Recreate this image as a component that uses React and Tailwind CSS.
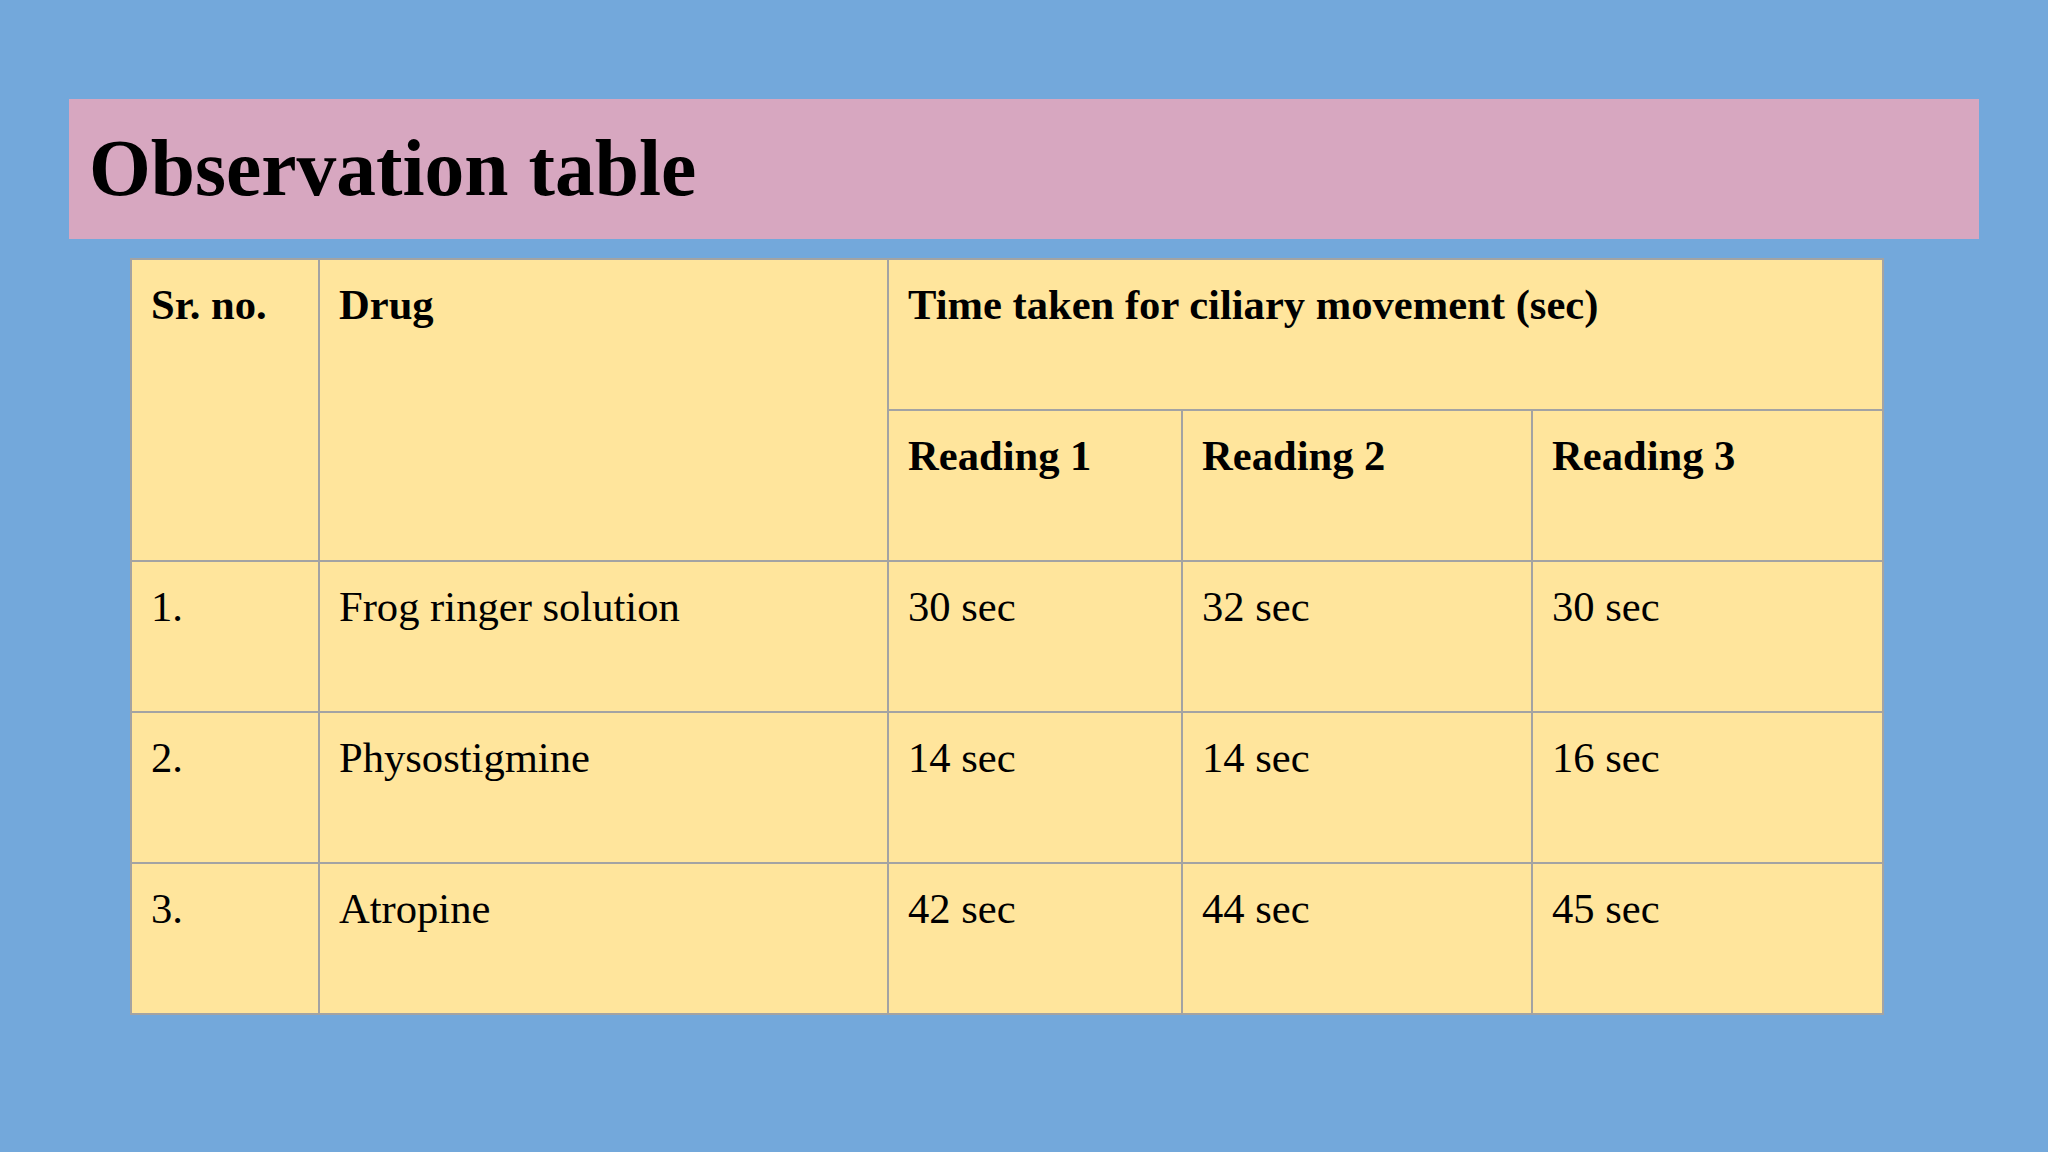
const rows = [
    { no: "1.", drug: "Frog ringer solution", r: ["30 sec", "32 sec", "30 sec"] },
    { no: "2.", drug: "Physostigmine", r: ["14 sec", "14 sec", "16 sec"] },
    { no: "3.", drug: "Atropine", r: ["42 sec", "44 sec", "45 sec"] },
];

const cell = "border-2 border-[#a3a3a3] align-top text-left px-[19px] pt-[21px] h-[151px]";

const App = () => {
    return (
        <div className="w-full h-[1152px] bg-[#73a8db] pt-[99px] px-[69px] font-['Liberation_Serif',serif] text-black">
            {/* title bar */}
            <div className="h-[140px] bg-[#d7a7c0] flex items-center px-[20px]">
                <h1 className="text-[79.5px] font-bold leading-none">Observation table</h1>
            </div>

            <div className="mt-[19px] ml-[61px]">
                <table className="table-fixed border-collapse w-[1752px] bg-[#ffe59c] text-[42.6px] leading-[1.15]">
                    <colgroup>
                        <col className="w-[188px]" />
                        <col className="w-[569px]" />
                        <col className="w-[294px]" />
                        <col className="w-[350px]" />
                        <col className="w-[351px]" />
                    </colgroup>
                    <thead>
                        <tr className="font-bold">
                            <th rowSpan={2} className={cell}>Sr. no.</th>
                            <th rowSpan={2} className={cell}>Drug</th>
                            <th colSpan={3} className={cell}>Time taken for ciliary movement (sec)</th>
                        </tr>
                        <tr className="font-bold">
                            <th className={cell}>Reading 1</th>
                            <th className={cell}>Reading 2</th>
                            <th className={cell}>Reading 3</th>
                        </tr>
                    </thead>
                    <tbody>
                        {rows.map((row) => (
                            <tr key={row.no}>
                                <td className={cell}>{row.no}</td>
                                <td className={cell}>{row.drug}</td>
                                {row.r.map((v, i) => (
                                    <td key={i} className={cell}>{v}</td>
                                ))}
                            </tr>
                        ))}
                    </tbody>
                </table>
            </div>
        </div>
    );
};

export default App;
